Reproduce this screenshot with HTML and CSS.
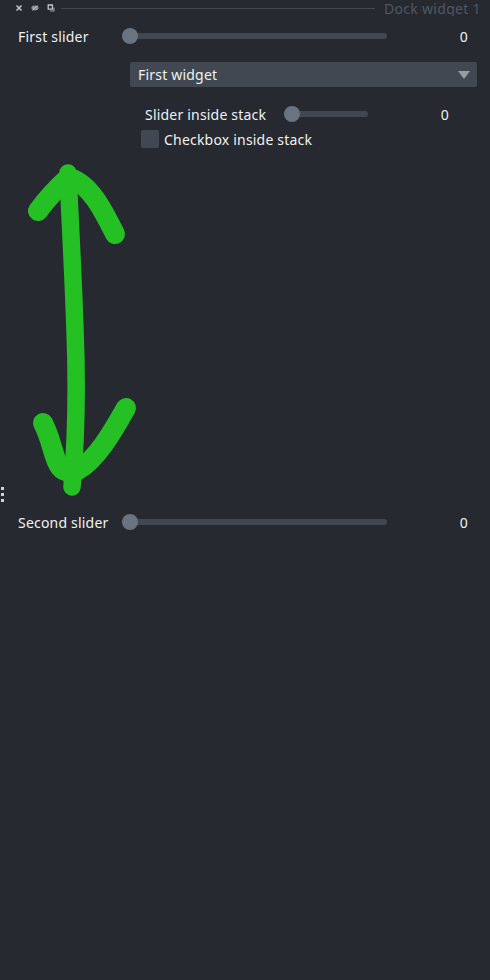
FILE: index.html
```html
<!DOCTYPE html>
<html lang="en">
<head>
  <meta charset="UTF-8" />
  <title>Dock widget 1</title>
  <link rel="stylesheet" href="styles.css">
</head>
<body>
  <div class="dock">
    <div class="dock-title">
      <svg class="title-icon" viewBox="0 0 8 8"><path d="M1.5 1.5 6.5 6.5M6.5 1.5 1.5 6.5" stroke="#c4c6c9" stroke-width="1.5" fill="none"/></svg>
      <svg class="title-icon" viewBox="0 0 8 8"><ellipse cx="4" cy="4" rx="3.6" ry="2.4" fill="#8f9297"/><path d="M1.5 6.5 6.5 1.5" stroke="#d1d2d4" stroke-width=".8"/></svg>
      <svg class="title-icon" viewBox="0 0 8 8"><path d="M1.2 1H5.4V5.2H1.2Z" fill="none" stroke="#c4c6c9" stroke-width="1.3"/><path d="M3 7H7V3.4" fill="none" stroke="#9a9da2" stroke-width="1.2"/></svg>
      <div class="title-line"></div>
      <span class="title-text">Dock widget 1</span>
    </div>

    <div class="slider-row">
      <label class="row-label">First slider</label>
      <div class="slider"><span class="handle"></span></div>
      <span class="value">0</span>
    </div>

    <div class="stack">
      <div class="combo">
        <span>First widget</span>
        <span class="combo-arrow"></span>
      </div>
      <div class="stack-slider">
        <label class="stack-label">Slider inside stack</label>
        <div class="slider slider-small"><span class="handle"></span></div>
        <span class="value">0</span>
      </div>
      <div class="check-row">
        <span class="checkbox"></span>
        <label>Checkbox inside stack</label>
      </div>
    </div>

    <div class="splitter">
      <span class="dot"></span>
      <span class="dot"></span>
      <span class="dot"></span>
    </div>

    <div class="slider-row">
      <label class="row-label">Second slider</label>
      <div class="slider"><span class="handle"></span></div>
      <span class="value">0</span>
    </div>
  </div>

  <!-- hand drawn arrow on top of the widgets -->
  <svg class="scribble" viewBox="0 0 490 980">
    <g class="stroke-line">
      <path d="M68 173C70 220 73 270 75 330C77 380 77 430 72 487"/>
    </g>
    <g class="stroke-barb">
      <path d="M38 211C46 200 57 188 68 178"/>
      <path d="M70 178C90 184 103 210 115 234"/>
      <path d="M43 423C51 438 52 452 58 464C62 472 70 474 78 470C96 460 112 433 126 408"/>
    </g>
  </svg>
</body>
</html>
```

FILE: styles.css
```css
body {
  margin: 0;
  height: 980px;
  overflow: hidden;
  background-color: #262930;
  color: #f0f1f2;
  font-family: "Noto Sans", sans-serif;
  font-size: 14px;
  letter-spacing: 0.2px;
}

.dock {
  display: flex;
  flex-direction: column;
}

.dock-title {
  display: flex;
  align-items: center;
  gap: 8px;
  height: 16px;
  padding-left: 15px;
  overflow: hidden;
}

.title-icon {
  width: 8px;
  height: 8px;
  flex: none;
}

.title-line {
  width: 314px;
  height: 1px;
  margin-left: -2px;
  background-color: #414851;
}

.title-text {
  margin-left: 1px;
  color: #505762;
  letter-spacing: 0.3px;
  white-space: nowrap;
}

.slider-row {
  display: flex;
  align-items: center;
  height: 24px;
  margin-top: 8px;
  padding-left: 18px;
  padding-right: 22px;
}

.row-label {
  width: 104px;
  flex: none;
}

.slider {
  position: relative;
  width: 265px;
  height: 6px;
  flex: none;
  border-radius: 3px;
  background-color: #414851;
}

.handle {
  position: absolute;
  left: 0;
  top: -5px;
  width: 16px;
  height: 16px;
  border-radius: 50%;
  background-color: #6a7380;
}

.value {
  margin-left: auto;
}

.stack {
  display: flex;
  flex-direction: column;
  margin-top: 14px;
  margin-left: 130px;
  margin-right: 13px;
}

.combo {
  display: flex;
  align-items: center;
  justify-content: space-between;
  height: 25px;
  padding: 0 7px 0 8px;
  border-radius: 2px;
  background-color: #414851;
}

.combo-arrow {
  width: 0;
  height: 0;
  border-left: 6.5px solid transparent;
  border-right: 6.5px solid transparent;
  border-top: 8px solid #9a9da2;
}

.stack-slider {
  display: flex;
  align-items: center;
  height: 24px;
  margin-top: 15px;
  padding-left: 15px;
  padding-right: 28px;
}

.stack-label {
  width: 139px;
  flex: none;
}

.slider-small {
  width: 84px;
}

.check-row {
  display: flex;
  align-items: center;
  gap: 5px;
  height: 18px;
  margin-top: 4px;
  margin-left: 11px;
}

.checkbox {
  width: 18px;
  height: 18px;
  border-radius: 2px;
  background-color: #414851;
}

.splitter {
  display: flex;
  flex-direction: column;
  gap: 3px;
  margin-top: 339px;
  padding-left: 1px;
}

.dot {
  width: 3px;
  height: 3px;
  background-color: #d1d2d4;
}

.splitter + .slider-row {
  margin-top: 8px;
}

.scribble {
  position: absolute;
  left: 0;
  top: 0;
  width: 490px;
  height: 980px;
  pointer-events: none;
}

.stroke-line,
.stroke-barb {
  fill: none;
  stroke: #24c024;
  stroke-linecap: round;
  stroke-linejoin: round;
}

.stroke-line {
  stroke-width: 17.5px;
}

.stroke-barb {
  stroke-width: 20px;
}
```
